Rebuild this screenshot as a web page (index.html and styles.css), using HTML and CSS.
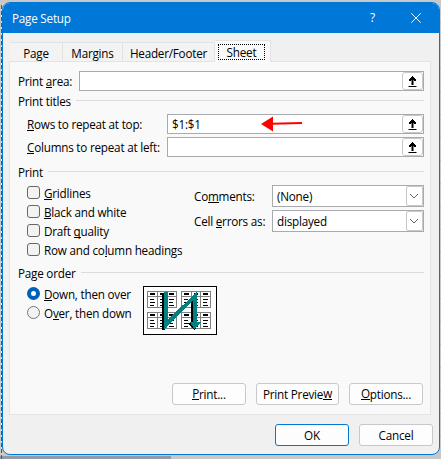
FILE: index.html
```html
<!DOCTYPE html>
<html lang="en">
<head>
<meta charset="utf-8">
<title>Page Setup</title>
<link rel="stylesheet" href="styles.css">
</head>
<body>
<svg class="defs" width="0" height="0">
  <symbol id="collapse" viewBox="0 0 21 18"><path d="M10 4h1v1h1v1h1v1h1v2h-2V8h-.500v5h-2V8H9v1H7V7h1V6h1V5h1zM6.500 14h8v1h-8z" fill="#000"/></symbol>
  <symbol id="chevron" viewBox="0 0 16 20"><path d="m4 8 4 4 4-4" fill="none" stroke="#666" stroke-width="1"/></symbol>
  <symbol id="sheet" viewBox="0 0 30 17">
    <path d="M.5.5h29v16H.5zM10.5 0v17M19.5 0v17M0 5.500h30" fill="#fff" stroke="#808080"/>
    <path d="M3 3h5M13 3h4M22 3h5" stroke="#000" stroke-width="2"/>
    <path d="M3 8.500h4M3 11.500h5M3 14.500h4M13 8.500h4M13 11.500h4M13 14.500h4M22 8.500h5M22 11.500h4M22 14.500h5" stroke="#000"/>
  </symbol>
</svg>
<main class="dialog">
  <header class="titlebar">
    <h1>Page Setup</h1>
    <span class="help">?</span>
    <svg class="close" width="10" height="10"><path d="m.3.3 9.400 9.400M9.700.3.3 9.700" stroke="#fff" fill="none"/></svg>
  </header>
  <nav class="tabs">
    <span class="tab page">Page</span><span class="tab margins">Margins</span><span class="tab hf">Header/Footer</span><span class="tab active"><b>Sheet</b></span>
  </nav>
  <section class="panel">
    <div class="field area"><label>Print <u>a</u>rea:</label><div class="input"><i><svg><use href="#collapse"/></svg></i></div></div>
    <h2 class="titles"><span>Print titles</span></h2>
    <div class="field rows"><label><u>R</u>ows to repeat at top:</label><div class="input"><span>$1:$1</span><svg class="arrow" width="43" height="18"><path d="M11 9.700 41 9" stroke="#f00" stroke-width="2"/><path d="M0 10 12 2.500v15z" fill="#f00"/></svg><i><svg><use href="#collapse"/></svg></i></div></div>
    <div class="field cols"><label><u>C</u>olumns to repeat at left:</label><div class="input"><i><svg><use href="#collapse"/></svg></i></div></div>
    <h2 class="print"><span>Print</span></h2>
    <div class="printgroup">
      <div class="checks">
        <label><i></i><span><u>G</u>ridlines</span></label>
        <label><i></i><span><u>B</u>lack and white</span></label>
        <label><i></i><span>Draft <u>q</u>uality</span></label>
        <label><i></i><span class="headings">Row and co<u>l</u>umn headings</span></label>
      </div>
      <div class="selects">
        <div><label>Co<u>m</u>ments:</label><div class="select"><span>(None)</span><i><svg><use href="#chevron"/></svg></i></div></div>
        <div><label>Cell <u>e</u>rrors as:</label><div class="select"><span>displayed</span><i><svg><use href="#chevron"/></svg></i></div></div>
      </div>
    </div>
    <h2 class="order"><span>Page order</span></h2>
    <div class="ordergroup">
      <div class="radios">
        <label><i class="on"></i><span><u>D</u>own, then over</span></label>
        <label><i></i><span>O<u>v</u>er, then down</span></label>
      </div>
      <svg class="preview" width="74" height="49" viewBox="0 0 74 49" shape-rendering="crispEdges">
        <path d="M.5.5h73v48H.5z" fill="#fff" stroke="#000"/>
        <use href="#sheet" x="4" y="5" width="30" height="17"/><use href="#sheet" x="38" y="5" width="30" height="17"/>
        <use href="#sheet" x="4" y="26" width="30" height="17"/><use href="#sheet" x="38" y="26" width="30" height="17"/>
        <path d="M19 8h3v36h-3zM48 11h4v27h-4zM44 37h3l6 6-2 1z" fill="#000"/>
        <path d="M21 6h4v27L54 6v30h4l-7 7-4-7h3V15L21 43z" fill="#008080"/>
      </svg>
    </div>
    <div class="actions"><button><u>P</u>rint...</button><button class="wide">Print Previe<u>w</u></button><button><u>O</u>ptions...</button></div>
  </section>
  <footer><button class="ok">OK</button><button>Cancel</button></footer>
</main>
</body>
</html>
```
FILE: styles.css
```css
* { box-sizing: border-box; }
body {
  margin: 0; padding: 2px 1px 4px 2px; width: 441px; height: 459px; overflow: hidden;
  font: 11.7px/16px "Open Sans", "Noto Sans", sans-serif; letter-spacing: -.22px; color: #000;
  background:
    repeating-linear-gradient(#555 0 4px, #ddd 4px 6px) 1px 5px / 1px 100% no-repeat,
    linear-gradient(#9299a8, #9299a8) 0 456px / 171px 3px no-repeat,
    repeating-linear-gradient(#c8c8c8 0 22px, #acb4bd 22px 23px);
}
.defs { position: absolute; }
.dialog { height: 453px; border: 1px solid #0078d4; border-radius: 8px; background: #f0f0f0; overflow: hidden; display: flex; flex-direction: column; }
h1, h2 { margin: 0; font-size: inherit; font-weight: 400; }
label, h2, .tab, .select, .input, button { white-space: nowrap; }
u { text-decoration: none; box-shadow: inset 0 -1px #000; display: inline-block; height: 15px; line-height: 16px; vertical-align: top; }
.titlebar { height: 30px; flex: none; display: flex; align-items: center; background: #0078d7; color: #fff; padding: 0 18px 0 9px; }
.titlebar h1 { flex: 1; }
.help { margin-right: 36px; font-size: 12px; }
.close { display: block; }
.tabs { display: flex; align-items: flex-end; height: 28px; padding-left: 7px; flex: none; }
.tab { height: 19px; border: 1px solid #e3e3e3; border-width: 1px 1px 0 0; background: #f3f3f3; text-align: center; line-height: 21px; }
.page { width: 53px; }
.margins { width: 60px; }
.hf { width: 92px; }
.active { width: 56px; height: 22px; margin-bottom: -1px; padding: 3px 5px 0 3px; background: #f9f9f9; z-index: 1; }
.active b { display: block; font-weight: 400; border: 1px dotted #000; height: 16px; line-height: 15px; }
.panel { flex: none; width: 422px; height: 354px; margin-left: 6px; border: 1px solid #e3e3e3; background: #f9f9f9; padding: 9px 6px 0 8px; }
.field { display: flex; height: 20px; align-items: center; }
.input { position: relative; flex: none; margin-left: auto; height: 20px; width: 257px; border: 1px solid #a9a9b0; background: #fff; display: flex; align-items: center; justify-content: space-between; padding-left: 4px; }
.input i { width: 21px; height: 18px; border: 1px solid #c8c8c8; border-radius: 3px; background: #fff; margin-left: auto; }
.input i svg { display: block; width: 21px; height: 18px; margin: -1px; }
.area .input { width: 345px; }
.arrow { position: absolute; left: 93px; top: -1px; }
.rows { padding-left: 9px; margin-top: 5px; }
.cols { padding-left: 9px; margin-top: 3px; }
h2 { display: flex; align-items: center; height: 16px; }
h2::after { content: ""; flex: 1; height: 1px; background: #dcdcdc; margin: -1px 0 0 5px; }
.titles { margin-top: 2px; }
.print { margin-top: 7px; }
.printgroup { display: flex; justify-content: space-between; height: 76px; margin-top: 3px; }
.checks { padding: 0 0 0 9px; }
.checks label, .radios label { display: flex; align-items: center; height: 19px; gap: 4px; }
.checks i, .radios i { width: 13px; height: 13px; border: 1px solid #666; border-radius: 3px; background: #f3f3f3; }
.radios i { border-radius: 50%; border-color: #777; }
.radios .on { border: 4px solid #005fb8; background: #fff; }
.selects { width: 230px; padding-top: 2px; display: flex; flex-direction: column; gap: 3px; }
.selects > div { display: flex; justify-content: space-between; align-items: center; }
.select { width: 152px; height: 22px; border: 1px solid #a9a9b0; background: #fff; display: flex; align-items: center; justify-content: space-between; padding-left: 4px; }
.select i { width: 17px; height: 20px; border: 1px solid #c8c8c8; border-radius: 2px; }
.select svg { display: block; width: 16px; height: 20px; margin: -1px; }
.order { margin-top: 6px; }
.ordergroup { display: flex; height: 53px; padding-left: 9px; margin-top: 3px; }
.radios { width: 116px; }
.preview { display: block; margin-top: 2px; }
.actions { display: flex; gap: 10px; justify-content: flex-end; margin-top: 46px; padding-right: 1px; }
button { width: 74px; height: 22px; padding: 0; border: 1px solid #c6c8cb; border-radius: 3px; background: #fdfdfd; font: inherit; letter-spacing: inherit; color: inherit; line-height: 18px; }
.wide { width: 83px; }
footer { display: flex; justify-content: flex-end; gap: 10px; padding: 9px 6px 0 0; }
.ok { border: 1px solid #0078d4; }
```
